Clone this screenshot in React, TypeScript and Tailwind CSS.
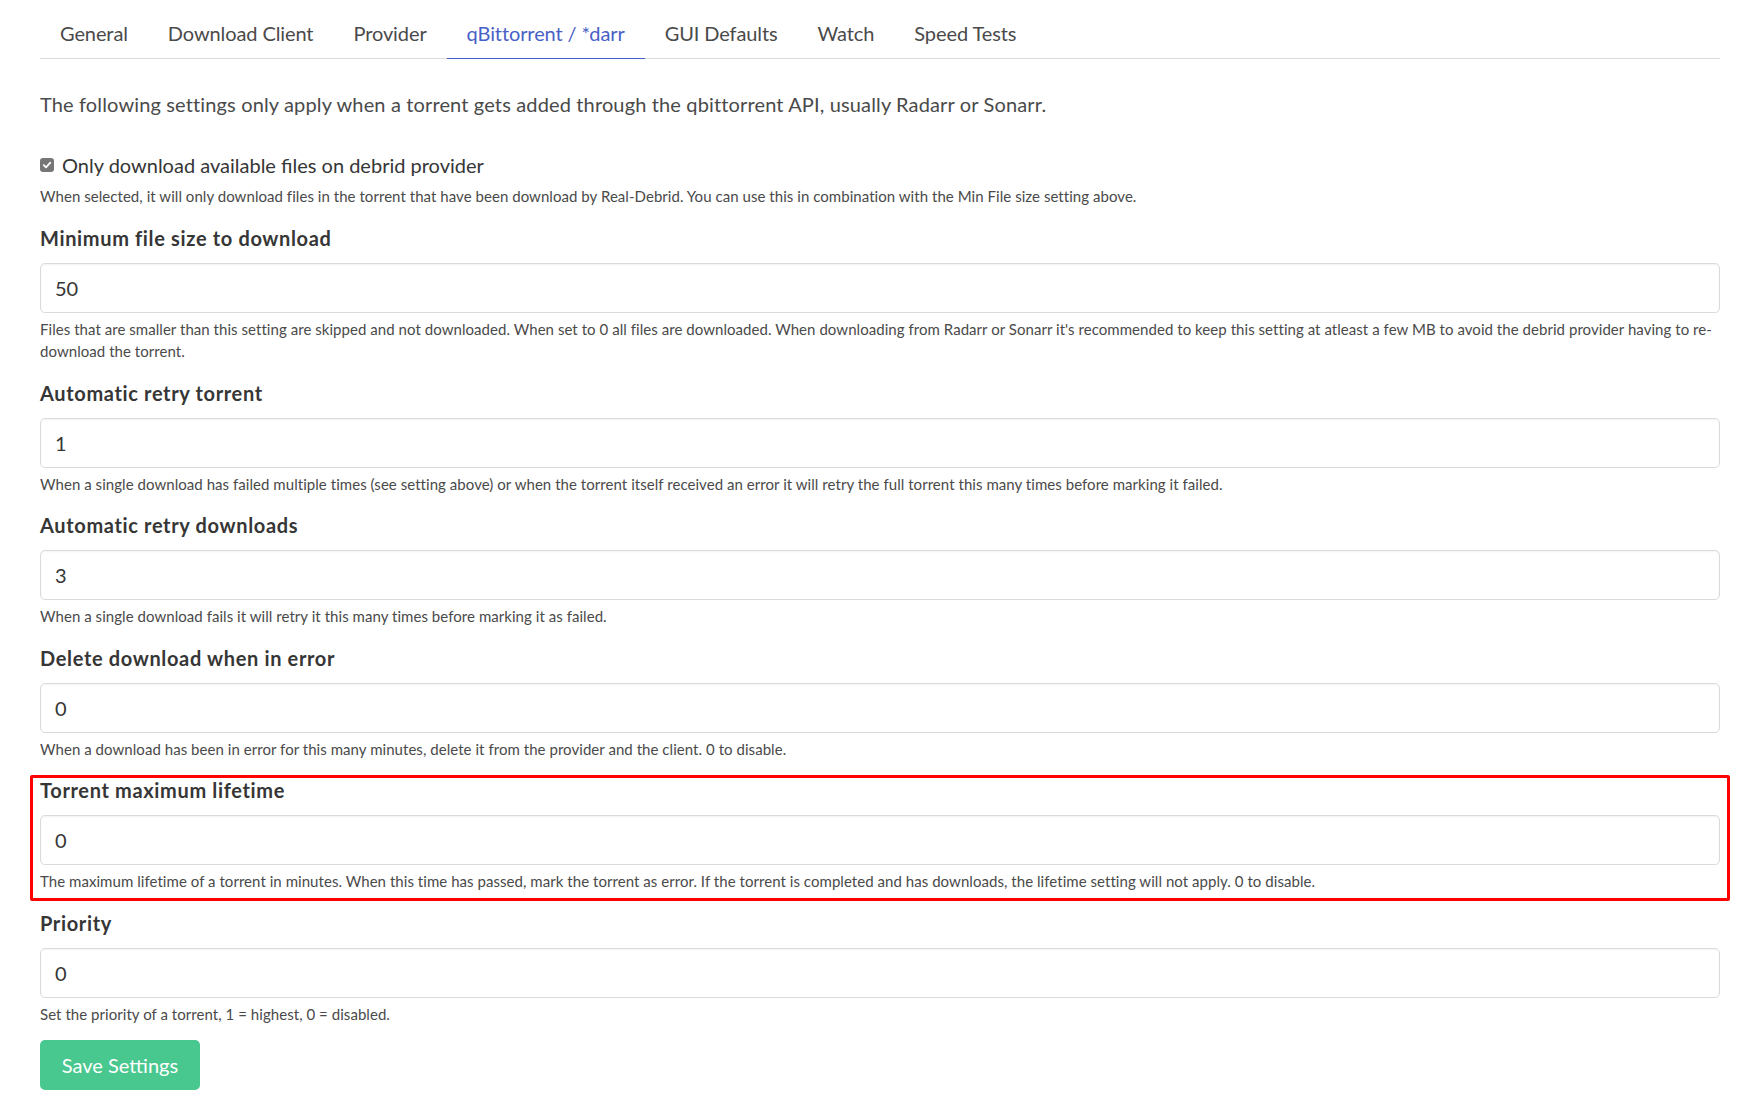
import React from 'react';

const tabs = ['General', 'Download Client', 'Provider', 'qBittorrent / *darr', 'GUI Defaults', 'Watch', 'Speed Tests'];

type Setting = {
  label: string;
  value: string;
  help: React.ReactNode;
  highlight?: boolean;
};

const settings: Setting[] = [
  {
    label: 'Minimum file size to download',
    value: '50',
    help: (
      <>
        Files that are smaller than this setting are skipped and not downloaded. When set to 0 all files are downloaded. When
        downloading from Radarr or Sonarr it's recommended to keep this setting at atleast a few MB to avoid the debrid provider
        having to re-download the torrent.
      </>
    ),
  },
  {
    label: 'Automatic retry torrent',
    value: '1',
    help: 'When a single download has failed multiple times (see setting above) or when the torrent itself received an error it will retry the full torrent this many times before marking it failed.',
  },
  {
    label: 'Automatic retry downloads',
    value: '3',
    help: 'When a single download fails it will retry it this many times before marking it as failed.',
  },
  {
    label: 'Delete download when in error',
    value: '0',
    help: 'When a download has been in error for this many minutes, delete it from the provider and the client. 0 to disable.',
  },
  {
    label: 'Torrent maximum lifetime',
    value: '0',
    help: 'The maximum lifetime of a torrent in minutes. When this time has passed, mark the torrent as error. If the torrent is completed and has downloads, the lifetime setting will not apply. 0 to disable.',
    highlight: true,
  },
  {
    label: 'Priority',
    value: '0',
    help: 'Set the priority of a torrent, 1 = highest, 0 = disabled.',
  },
];

function Field({ setting }: { setting: Setting }) {
  return (
    <div className="relative mb-[15px]">
      <label className="block text-[20px] leading-[30px] font-bold tracking-[0.65px] text-[#363636] mb-[10px]">
        {setting.label}
      </label>
      <input
        type="text"
        defaultValue={setting.value}
        className="block w-full h-[50px] border border-[#dbdbdb] rounded-[5px] bg-white pl-[14px] text-[20px] text-[#363636] shadow-[inset_0_1px_2px_rgba(10,10,10,0.05)] outline-none"
      />
      <p className="mt-[5px] text-[15px] leading-[22.5px] tracking-[0.05px] text-[#4a4a4a]">{setting.help}</p>

      {/* Annotation box drawn over the field */}
      {setting.highlight && (
        <div className="pointer-events-none absolute -left-[10px] -right-[10px] top-0 -bottom-[8px] border-[3px] border-[#ff0000] rounded-[2px]" />
      )}
    </div>
  );
}

export default function App() {
  return (
    <div className="min-h-screen bg-white font-['Lato','Liberation_Sans',sans-serif] text-[#4a4a4a]">
      <div className="w-[1680px] ml-[40px] pt-[8px] pb-[20px]">
        {/* Tabs */}
        <ul className="flex border-b border-[#dbdbdb] mb-[30px]">
          {tabs.map((t) => {
            const active = t === 'qBittorrent / *darr';
            return (
              <li key={t}>
                <a
                  className={
                    active
                      ? 'block px-[20px] py-[10px] text-[20px] leading-[30px] tracking-[-0.1px] text-[#485fc7] border-b border-[#485fc7] -mb-px'
                      : 'block px-[20px] py-[10px] text-[20px] leading-[30px] tracking-[-0.1px] text-[#4a4a4a] border-b border-[#dbdbdb] -mb-px'
                  }
                >
                  {t}
                </a>
              </li>
            );
          })}
        </ul>

        <p className="text-[20px] leading-[30px] tracking-[0.14px] mb-[31px]">
          The following settings only apply when a torrent gets added through the qbittorrent API, usually Radarr or Sonarr.
        </p>

        {/* Checkbox */}
        <div className="mb-[15px]">
          <label className="flex items-center text-[20px] leading-[30px] text-[#363636]">
            <span className="w-[14px] h-[14px] rounded-[3px] bg-[#767676] flex items-center justify-center mr-[8px]">
              <svg width="10" height="10" viewBox="0 0 10 10" fill="none">
                <path d="M1.8 5.2 L4 7.3 L8.3 2.6" stroke="white" strokeWidth="1.8" strokeLinecap="round" strokeLinejoin="round" />
              </svg>
            </span>
            Only download available files on debrid provider
          </label>
          <p className="mt-[5px] text-[15px] leading-[22.5px] tracking-[0.05px]">
            When selected, it will only download files in the torrent that have been download by Real-Debrid. You can use this in
            combination with the Min File size setting above.
          </p>
        </div>

        {settings.map((s) => (
          <Field key={s.label} setting={s} />
        ))}

        <button className="w-[160px] h-[50px] rounded-[5px] bg-[#48c78e] text-white text-[20px] leading-[30px]">
          Save Settings
        </button>
      </div>
    </div>
  );
}
